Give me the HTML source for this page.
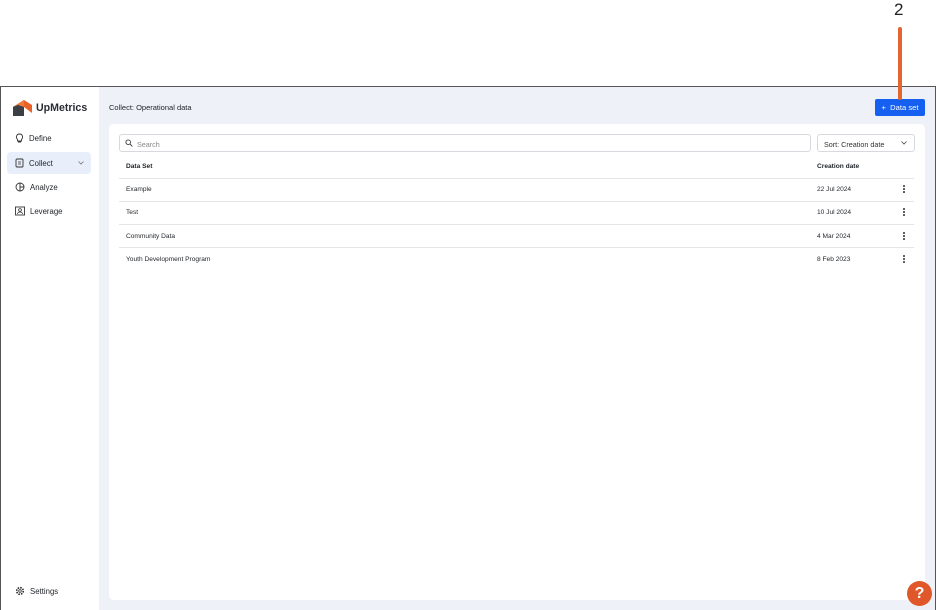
<!DOCTYPE html>
<html><head><meta charset="utf-8"><style>
*{box-sizing:border-box;margin:0;padding:0}
body{width:936px;height:610px;background:#fff;font-family:"Liberation Sans",sans-serif;position:relative;overflow:hidden;color:#1f2328}
.frame{position:absolute;left:0;top:86px;width:936px;height:524px;border:1px solid #555;border-bottom:none}
.side{position:absolute;left:1px;top:87px;width:98px;height:523px;background:#fff}
.main{position:absolute;left:99px;top:87px;width:836px;height:523px;background:#eef2f8}
.nav{position:absolute;left:7px;width:84px;height:22px;font-size:7.8px;display:flex;align-items:center;padding-left:8px;gap:5px;border-radius:4px}
.card{position:absolute;left:109px;top:124px;width:816px;height:476px;background:#fff;border-radius:5px}
.t{position:absolute;font-size:6.6px}
.line{position:absolute;left:119px;width:795px;height:1px;background:#e3e5e8}
.dots{position:absolute;left:903px;width:2px}
.dots i{display:block;width:1.6px;height:1.6px;background:#444;border-radius:50%;margin-bottom:1.4px}
</style></head><body>
<div style="position:absolute;left:894px;top:0;font-size:17px;color:#222">2</div>
<div class="frame"></div>
<div class="side"></div>
<div class="main"></div>
<svg style="position:absolute;left:12px;top:99px" width="22" height="18" viewBox="0 0 22 18"><polygon points="1,8 12,1 12,17 1,17" fill="#3c3f45"/><polygon points="12,1 20,6 20,14 12,8" fill="#e8622a"/><polygon points="1,8 12,1 12,8 6,6" fill="#f07a3a"/></svg>
<div style="position:absolute;left:36px;top:102px;font-size:10.6px;font-weight:bold;color:#2a2d33">UpMetrics</div>
<div class="nav" style="top:127px"><svg width="9" height="10" viewBox="0 0 9 10"><path d="M4.5 1a3 3 0 0 0-2 5.3V8h4V6.3A3 3 0 0 0 4.5 1zM3 9h3" fill="none" stroke="#333" stroke-width="0.9"/></svg>Define</div>
<div class="nav" style="top:152px;background:#e8eefa"><svg width="9" height="10" viewBox="0 0 9 10"><rect x="1" y="1" width="7" height="8" rx="1" fill="none" stroke="#333" stroke-width="0.9"/><path d="M3 4h3M3 6h3" stroke="#333" stroke-width="0.8"/></svg>Collect<svg style="position:absolute;right:7px" width="6" height="4" viewBox="0 0 6 4"><path d="M0.5 0.5L3 3 5.5 0.5" fill="none" stroke="#777" stroke-width="0.8"/></svg></div>
<div class="nav" style="top:176px"><svg width="10" height="10" viewBox="0 0 10 10"><circle cx="5" cy="5" r="4" fill="none" stroke="#333" stroke-width="0.9"/><path d="M5 1v8M5 5h4" stroke="#333" stroke-width="0.9"/></svg>Analyze</div>
<div class="nav" style="top:200px"><svg width="10" height="10" viewBox="0 0 10 10"><rect x="0.5" y="1" width="9" height="8" fill="none" stroke="#333" stroke-width="0.9"/><circle cx="5" cy="4" r="1.4" fill="none" stroke="#333" stroke-width="0.8"/><path d="M2.5 8a2.5 2 0 0 1 5 0" fill="none" stroke="#333" stroke-width="0.8"/></svg>Leverage</div>
<div class="nav" style="top:580px"><svg width="10" height="10" viewBox="0 0 10 10"><circle cx="5" cy="5" r="3.3" fill="none" stroke="#333" stroke-width="1.6" stroke-dasharray="1.6 1"/><circle cx="5" cy="5" r="1.3" fill="none" stroke="#333" stroke-width="0.8"/></svg>Settings</div>
<div class="t" style="left:109px;top:103px;font-size:7.5px">Collect: Operational data</div>
<div style="position:absolute;left:875px;top:99px;width:50px;height:17px;background:#1560f0;border-radius:2px;color:#fff;font-size:7.6px;display:flex;align-items:center;justify-content:center">+&nbsp; Data set</div>
<div style="position:absolute;left:898px;top:27px;width:4px;height:73px;background:#e3652f;border-radius:2px"></div>
<div class="card"></div>
<div style="position:absolute;left:119px;top:134px;width:692px;height:18px;border:1px solid #d6d9de;border-radius:3px;font-size:7.2px;color:#888;padding:4.5px 0 0 17px">Search</div>
<svg style="position:absolute;left:125px;top:139px" width="8" height="8" viewBox="0 0 8 8"><circle cx="3.2" cy="3.2" r="2.3" fill="none" stroke="#444" stroke-width="0.9"/><path d="M5 5l2.4 2.4" stroke="#444" stroke-width="0.9"/></svg>
<div style="position:absolute;left:817px;top:134px;width:98px;height:18px;border:1px solid #d6d9de;border-radius:3px;font-size:7.2px;color:#333;padding:4.5px 0 0 6px">Sort: Creation date</div>
<svg style="position:absolute;left:901px;top:141px" width="6" height="4" viewBox="0 0 6 4"><path d="M0.5 0.5L3 3 5.5 0.5" fill="none" stroke="#444" stroke-width="0.8"/></svg>
<div class="t" style="left:126px;top:163px;font-weight:bold">Data Set</div>
<div class="t" style="left:817px;top:163px;font-weight:bold">Creation date</div>
<div class="line" style="top:178px"></div>
<div class="t" style="left:126px;top:186px">Example</div><div class="t" style="left:817px;top:186px">22 Jul 2024</div>
<div class="dots" style="top:185px"><i></i><i></i><i></i></div>
<div class="line" style="top:201px"></div>
<div class="t" style="left:126px;top:209px">Test</div><div class="t" style="left:817px;top:209px">10 Jul 2024</div>
<div class="dots" style="top:208px"><i></i><i></i><i></i></div>
<div class="line" style="top:224px"></div>
<div class="t" style="left:126px;top:233px">Community Data</div><div class="t" style="left:817px;top:233px">4 Mar 2024</div>
<div class="dots" style="top:232px"><i></i><i></i><i></i></div>
<div class="line" style="top:247px"></div>
<div class="t" style="left:126px;top:256px">Youth Development Program</div><div class="t" style="left:817px;top:256px">8 Feb 2023</div>
<div class="dots" style="top:255px"><i></i><i></i><i></i></div>
<div style="position:absolute;left:907px;top:581px;width:25px;height:25px;border-radius:50%;background:#e0572a;color:#fff;font-weight:bold;font-size:16px;text-align:center;line-height:25px">?</div>
</body></html>
